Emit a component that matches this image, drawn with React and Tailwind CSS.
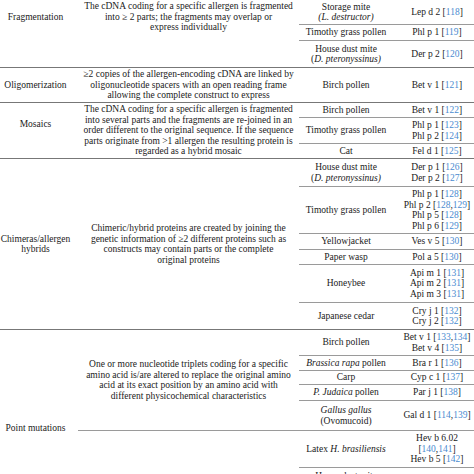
import React from "react";

const BASE =
  "border-t flex items-center justify-center text-center whitespace-nowrap";

function Refs({ refs }) {
  return (
    <>
      [
      {refs.map((r, i) => (
        <React.Fragment key={r}>
          {i > 0 && ","}
          <span className="text-[#4a8bd0]">{r}</span>
        </React.Fragment>
      ))}
      ]
    </>
  );
}

function Al({ name, refs }) {
  return (
    <div>
      {name} <Refs refs={refs} />
    </div>
  );
}

function C({ children, extra = "", g = false }) {
  return (
    <div className={`${BASE} ${g ? "border-[#777777]" : "border-[#9a9a9a]"} ${extra}`}>
      <div>{children}</div>
    </div>
  );
}

export default function App() {
  return (
    <div className="w-[474px] h-[474px] overflow-hidden bg-white font-['Liberation_Serif',serif] text-[9.5px] leading-[10.5px] text-[#1a1a1a]">
      <div className="grid w-[488px] -ml-[7px] -mt-[34px] grid-cols-[85px_221px_94px_88px] grid-rows-[33px_25px_16px_27px_35px_15px_26px_15px_28px_47px_16px_15px_38px_27px_26px_15px_14px_16px_30px_37px_27px_33px]">
        {/* Fragmentation */}
        <C g extra="row-span-4">Fragmentation</C>
        <C g extra="row-span-4">
          The cDNA coding for a specific allergen is fragmented
          <br />
          into ≥ 2 parts; the fragments may overlap or
          <br />
          express individually
        </C>
        <C g>Birch pollen</C>
        <C g>
          <Al name="Bet v 1" refs={["117"]} />
        </C>

        <C>
          Storage mite
          <br />
          <i>(L. destructor)</i>
        </C>
        <C>
          <Al name="Lep d 2" refs={["118"]} />
        </C>

        <C>Timothy grass pollen</C>
        <C>
          <Al name="Phl p 1" refs={["119"]} />
        </C>

        <C>
          House dust mite
          <br />(<i>D. pteronyssinus)</i>
        </C>
        <C>
          <Al name="Der p 2" refs={["120"]} />
        </C>

        {/* Oligomerization */}
        <C g>Oligomerization</C>
        <C g>
          ≥2 copies of the allergen-encoding cDNA are linked by
          <br />
          oligonucleotide spacers with an open reading frame
          <br />
          allowing the complete construct to express
        </C>
        <C g>Birch pollen</C>
        <C g>
          <Al name="Bet v 1" refs={["121"]} />
        </C>

        {/* Mosaics */}
        <C g extra="row-span-3 pb-[12px]">Mosaics</C>
        <C g extra="row-span-3">
          The cDNA coding for a specific allergen is fragmented
          <br />
          into several parts and the fragments are re-joined in an
          <br />
          order different to the original sequence. If the sequence
          <br />
          parts originate from &gt;1 allergen the resulting protein is
          <br />
          regarded as a hybrid mosaic
        </C>
        <C g>Birch pollen</C>
        <C g>
          <Al name="Bet v 1" refs={["122"]} />
        </C>

        <C>Timothy grass pollen</C>
        <C>
          <Al name="Phl p 1" refs={["123"]} />
          <Al name="Phl p 2" refs={["124"]} />
        </C>

        <C>Cat</C>
        <C>
          <Al name="Fel d 1" refs={["125"]} />
        </C>

        {/* Chimeras */}
        <C g extra="row-span-6">
          Chimeras/allergen
          <br />
          hybrids
        </C>
        <C g extra="row-span-6">
          Chimeric/hybrid proteins are created by joining the
          <br />
          genetic information of ≥2 different proteins such as
          <br />
          constructs may contain parts or the complete
          <br />
          original proteins
        </C>
        <C g>
          House dust mite
          <br />(<i>D. pteronyssinus)</i>
        </C>
        <C g>
          <Al name="Der p 1" refs={["126"]} />
          <Al name="Der p 2" refs={["127"]} />
        </C>

        <C>Timothy grass pollen</C>
        <C>
          <Al name="Phl p 1" refs={["128"]} />
          <Al name="Phl p 2" refs={["128", "129"]} />
          <Al name="Phl p 5" refs={["128"]} />
          <Al name="Phl p 6" refs={["129"]} />
        </C>

        <C>Yellowjacket</C>
        <C>
          <Al name="Ves v 5" refs={["130"]} />
        </C>

        <C>Paper wasp</C>
        <C>
          <Al name="Pol a 5" refs={["130"]} />
        </C>

        <C>Honeybee</C>
        <C>
          <Al name="Api m 1" refs={["131"]} />
          <Al name="Api m 2" refs={["131"]} />
          <Al name="Api m 3" refs={["131"]} />
        </C>

        <C>Japanese cedar</C>
        <C>
          <Al name="Cry j 1" refs={["132"]} />
          <Al name="Cry j 2" refs={["132"]} />
        </C>

        {/* Point mutations */}
        <C g extra="row-span-8">Point mutations</C>
        <C g extra="row-span-5">
          One or more nucleotide triplets coding for a specific
          <br />
          amino acid is/are altered to replace the original amino
          <br />
          acid at its exact position by an amino acid with
          <br />
          different physicochemical characteristics
        </C>
        <C g>Birch pollen</C>
        <C g>
          <Al name="Bet v 1" refs={["133", "134"]} />
          <Al name="Bet v 4" refs={["135"]} />
        </C>

        <C>
          <i>Brassica rapa</i> pollen
        </C>
        <C>
          <Al name="Bra r 1" refs={["136"]} />
        </C>

        <C>Carp</C>
        <C>
          <Al name="Cyp c 1" refs={["137"]} />
        </C>

        <C>
          <i>P. Judaica</i> pollen
        </C>
        <C>
          <Al name="Par j 1" refs={["138"]} />
        </C>

        <C>
          <i>Gallus gallus</i>
          <br />
          (Ovomucoid)
        </C>
        <C>
          <Al name="Gal d 1" refs={["114", "139"]} />
        </C>

        <C extra="row-span-3"> </C>
        <C>
          Latex <i>H. brasiliensis</i>
        </C>
        <C>
          <div>Hev b 6.02</div>
          <div>
            <Refs refs={["140", "141"]} />
          </div>
          <Al name="Hev b 5" refs={["142"]} />
        </C>

        <C>
          House dust mite
          <br />(<i>D. pteronyssinus)</i>
        </C>
        <C>
          <Al name="Der p 2" refs={["143"]} />
        </C>

        <C>Cat</C>
        <C>
          <Al name="Fel d 1" refs={["144"]} />
        </C>
      </div>
    </div>
  );
}
